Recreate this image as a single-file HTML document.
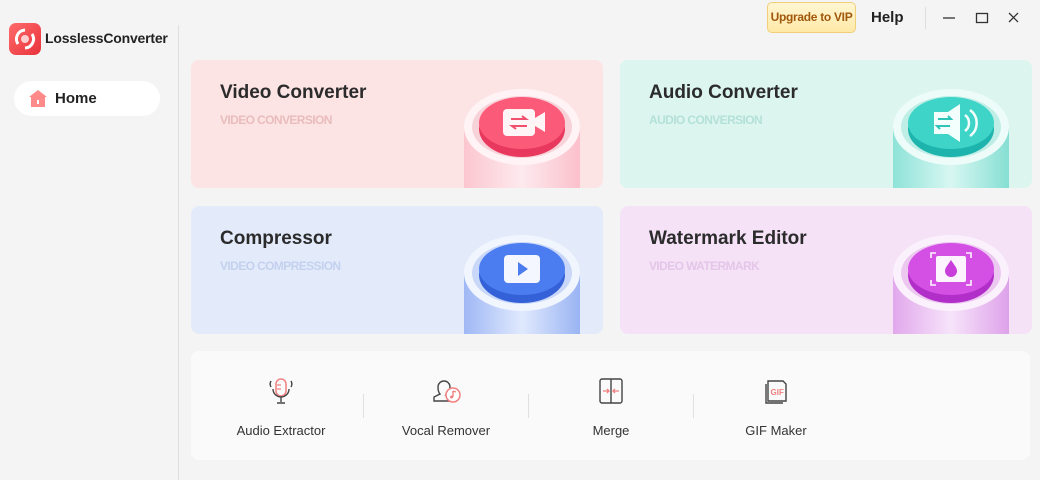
<!DOCTYPE html>
<html><head><meta charset="utf-8"><style>
*{margin:0;padding:0;box-sizing:border-box}
body{width:1040px;height:480px;background:#f4f4f4;font-family:"Liberation Sans",sans-serif;position:relative;overflow:hidden;color:#222}
.side{position:absolute;left:178px;top:25px;width:1px;height:455px;background:#dedede}
.logo{position:absolute;left:9px;top:23px;width:32px;height:32px;border-radius:7px;background:linear-gradient(135deg,#ff6b6b,#e8323a)}
.brand{position:absolute;left:45px;top:30px;font-size:14px;font-weight:bold;color:#222;letter-spacing:-0.2px}
.home{position:absolute;left:14px;top:81px;width:146px;height:35px;border-radius:18px;background:#fff}
.home span{position:absolute;left:41px;top:9px;font-size:15px;font-weight:bold}
.vip{position:absolute;left:767px;top:2px;width:89px;height:31px;border-radius:5px;background:linear-gradient(#fff6d2,#ffe9a8);border:1px solid #f1cf7a;color:#a0580d;font-size:12px;font-weight:bold;text-align:center;line-height:29px;letter-spacing:-0.3px}
.help{position:absolute;left:871px;top:9px;font-size:15px;font-weight:bold}
.vsep{position:absolute;left:925px;top:7px;width:1px;height:22px;background:#ddd}
.card{position:absolute;width:412px;height:128px;border-radius:8px;overflow:hidden}
.card h2{position:absolute;left:29px;top:22px;font-size:19px;font-weight:bold;color:#2b2b2b}
.card p{position:absolute;left:29px;top:53px;font-size:12px;font-weight:bold;letter-spacing:-0.6px}
.card svg{position:absolute;left:0;top:0}
.panel{position:absolute;left:191px;top:351px;width:839px;height:109px;background:#fafafa;border-radius:8px}
.tool{position:absolute;top:0;width:150px;text-align:center}
.tool span{position:absolute;top:72px;left:0;width:150px;font-size:13px;color:#333}
.tool svg{position:absolute;top:26px;left:61px}
.ts{position:absolute;top:43px;width:1px;height:24px;background:#e0e0e0}
</style></head><body>
<div class="side"></div>
<div class="logo"><svg width="32" height="32" viewBox="0 0 32 32"><path d="M16 7a9 9 0 0 0-7 14" stroke="#fff" stroke-width="3" fill="none"/><path d="M16 25a9 9 0 0 0 7-14" stroke="#fff" stroke-width="3" fill="none"/><circle cx="16" cy="16" r="4" fill="#ffd0d0"/></svg></div>
<div class="brand">LosslessConverter</div>
<div class="home"><svg style="position:absolute;left:15px;top:9px" width="18" height="17" viewBox="0 0 18 17"><path d="M9 0L0 7h2v10h14V7h2z" fill="#ff8a8a"/><rect x="8" y="10" width="2" height="4" fill="#fff"/></svg><span>Home</span></div>
<div class="vip">Upgrade to VIP</div>
<div class="help">Help</div>
<div class="vsep"></div>
<svg style="position:absolute;left:940px;top:10px" width="90" height="16"><path d="M3 8h12" stroke="#333" stroke-width="1.3"/><rect x="36.5" y="3.5" width="11" height="9" fill="none" stroke="#333" stroke-width="1.3"/><path d="M69 3l9 9M78 3l-9 9" stroke="#333" stroke-width="1.3"/></svg>

<div class="card" style="left:191px;top:60px;background:#fde4e4"><h2>Video Converter</h2><p style="color:#e9bcbc">VIDEO CONVERSION</p>
<svg width="412" height="128"><defs><linearGradient id="b1" x1="0" x2="1"><stop offset="0" stop-color="#fcc6cf"/><stop offset=".5" stop-color="#fdeaee"/><stop offset="1" stop-color="#fbc0cb"/></linearGradient></defs>
<rect x="273" y="67" width="116" height="61" fill="url(#b1)"/><ellipse cx="331" cy="67" rx="58" ry="38" fill="#fff3f5"/><ellipse cx="331" cy="67" rx="50" ry="31" fill="#f7d2d9"/><ellipse cx="331" cy="69" rx="43" ry="28" fill="#e8385d"/><ellipse cx="331" cy="63" rx="43" ry="26" fill="#fb5a78"/><rect x="312" y="49" width="32" height="27" rx="4" fill="#fff5f6"/><path d="M344 58l10-6v20l-10-6z" fill="#fff5f6"/><path d="M320 59h15l-4-3M336 66h-15l4 3" stroke="#f0506e" stroke-width="2" fill="none"/></svg></div>

<div class="card" style="left:620px;top:60px;background:#dcf5ef"><h2>Audio Converter</h2><p style="color:#b4e1d7">AUDIO CONVERSION</p>
<svg width="412" height="128"><defs><linearGradient id="b2" x1="0" x2="1"><stop offset="0" stop-color="#8ee3d8"/><stop offset=".5" stop-color="#d8f7f2"/><stop offset="1" stop-color="#86dfd3"/></linearGradient></defs>
<rect x="273" y="67" width="116" height="61" fill="url(#b2)"/><ellipse cx="331" cy="67" rx="58" ry="38" fill="#eefcf9"/><ellipse cx="331" cy="67" rx="50" ry="31" fill="#bfeee6"/><ellipse cx="331" cy="69" rx="43" ry="28" fill="#1cb4ad"/><ellipse cx="331" cy="63" rx="43" ry="26" fill="#3fd4c8"/><path d="M314 52h14l12-8v38l-12-8h-14z" fill="#f3fffd"/><path d="M345 55a10 10 0 0 1 0 16M350 50a16 16 0 0 1 0 26" stroke="#f3fffd" stroke-width="2.5" fill="none"/><path d="M318 59h13l-3-3M330 66h-13l3 3" stroke="#2fc4b9" stroke-width="2" fill="none"/></svg></div>

<div class="card" style="left:191px;top:206px;background:#e3ebfb"><h2>Compressor</h2><p style="color:#c3d1ee">VIDEO COMPRESSION</p>
<svg width="412" height="128"><defs><linearGradient id="b3" x1="0" x2="1"><stop offset="0" stop-color="#9fb8f5"/><stop offset=".5" stop-color="#e0e9fd"/><stop offset="1" stop-color="#9ab4f3"/></linearGradient></defs>
<rect x="273" y="67" width="116" height="61" fill="url(#b3)"/><ellipse cx="331" cy="67" rx="58" ry="38" fill="#f1f5fe"/><ellipse cx="331" cy="67" rx="50" ry="31" fill="#c9d7f8"/><ellipse cx="331" cy="69" rx="43" ry="28" fill="#3561d8"/><ellipse cx="331" cy="63" rx="43" ry="26" fill="#4c7df0"/><rect x="313" y="49" width="36" height="28" rx="4" fill="#f4f7ff"/><path d="M327 56l10 7-10 7z" fill="#4c7df0"/></svg></div>

<div class="card" style="left:620px;top:206px;background:#f5e2f7"><h2>Watermark Editor</h2><p style="color:#e4c6e8">VIDEO WATERMARK</p>
<svg width="412" height="128"><defs><linearGradient id="b4" x1="0" x2="1"><stop offset="0" stop-color="#e1a8ec"/><stop offset=".5" stop-color="#f7e4fa"/><stop offset="1" stop-color="#dea2ea"/></linearGradient></defs>
<rect x="273" y="67" width="116" height="61" fill="url(#b4)"/><ellipse cx="331" cy="67" rx="58" ry="38" fill="#fbf1fc"/><ellipse cx="331" cy="67" rx="50" ry="31" fill="#ecc8f1"/><ellipse cx="331" cy="69" rx="43" ry="28" fill="#b22ec8"/><ellipse cx="331" cy="63" rx="43" ry="26" fill="#d44fe4"/><rect x="316" y="50" width="30" height="26" rx="2" fill="#fdf3fe"/><path d="M331 54c-4 6-6 8-6 11a6 6 0 0 0 12 0c0-3-2-5-6-11z" fill="#c93ddb"/><path d="M311 52v-5h5M346 47h5v5M351 74v5h-5M316 79h-5v-5" stroke="#fdf3fe" stroke-width="1.6" fill="none"/></svg></div>

<div class="panel">
<div class="tool" style="left:15px"><svg width="28" height="28" viewBox="0 0 28 28"><rect x="9" y="2" width="10" height="17" rx="5" fill="none" stroke="#f08080" stroke-width="1.5"/><path d="M10 8h4M10 12h4" stroke="#f08080" stroke-width="1.3"/><path d="M6 12a8 8 0 0 0 16 0M14 20v5M10 26h8M4 4a6 6 0 0 0 0 6M24 4a6 6 0 0 1 0 6" stroke="#444" stroke-width="1.4" fill="none"/></svg><span>Audio Extractor</span></div>
<div class="ts" style="left:172px"></div>
<div class="tool" style="left:180px"><svg width="30" height="28" viewBox="0 0 30 28"><path d="M6 10a6 6 0 1 1 12 0c0 4-2 7-4 8l5 2v4H2v-4l6-3c-1-1-2-3-2-7z" fill="none" stroke="#444" stroke-width="1.4"/><circle cx="21" cy="18" r="7" fill="#fff" stroke="#f08080" stroke-width="1.5"/><path d="M21 14v6M21 14l3 1" stroke="#f08080" stroke-width="1.4"/><circle cx="19.5" cy="20" r="1.5" fill="#f08080"/></svg><span>Vocal Remover</span></div>
<div class="ts" style="left:337px"></div>
<div class="tool" style="left:345px"><svg width="28" height="28" viewBox="0 0 28 28"><rect x="3" y="2" width="22" height="24" rx="2" fill="none" stroke="#444" stroke-width="1.4"/><path d="M14 2v24" stroke="#444" stroke-width="1.4"/><path d="M6 14h6M10 12l2 2-2 2M22 14h-6M18 12l-2 2 2 2" stroke="#f08080" stroke-width="1.3" fill="none"/></svg><span>Merge</span></div>
<div class="ts" style="left:502px"></div>
<div class="tool" style="left:510px"><svg width="28" height="28" viewBox="0 0 28 28"><path d="M6 4h15l3 3v17H6z" fill="none" stroke="#444" stroke-width="1.4"/><path d="M4 7v19h17" fill="none" stroke="#444" stroke-width="1.4"/><text x="8.5" y="18" font-size="8" font-weight="bold" fill="#f08080" font-family="Liberation Sans">GIF</text></svg><span>GIF Maker</span></div>
</div>
</body></html>
